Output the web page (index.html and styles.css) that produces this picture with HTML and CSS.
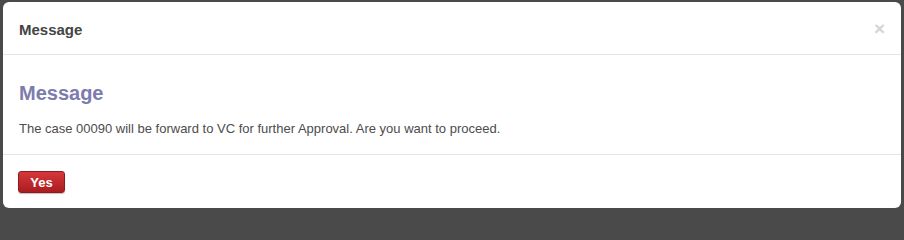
FILE: index.html
```html
<!DOCTYPE html>
<html>
<head>
<meta charset="utf-8">
<link rel="stylesheet" href="styles.css">
</head>
<body>
<div class="backdrop">
  <div class="modal">
    <div class="modal-header">
      <h4 class="modal-title">Message</h4>
      <span class="close">×</span>
    </div>
    <div class="modal-body">
      <h2 class="msg-title">Message</h2>
      <p class="msg-text">The case 00090 will be forward to VC for further Approval. Are you want to proceed.</p>
    </div>
    <div class="modal-footer">
      <button class="btn-yes">Yes</button>
    </div>
  </div>
</div>
</body>
</html>
```

FILE: styles.css
```css
html, body {
  margin: 0;
  padding: 0;
  height: 100%;
}
body {
  background: #4a4a4a;
  font-family: "Liberation Sans", Arial, sans-serif;
}
.backdrop {
  padding: 2px 3px 0 3px;
}
.modal {
  width: 898px;
  height: 206px;
  background: #fff;
  border-radius: 6px;
  box-sizing: border-box;
  display: flex;
  flex-direction: column;
  overflow: hidden;
}
.modal-header {
  height: 53px;
  border-bottom: 1px solid #e5e5e5;
  display: flex;
  align-items: center;
  justify-content: space-between;
  padding: 0 16px 0 16px;
  box-sizing: border-box;
  flex: none;
}
.modal-title {
  margin: 0;
  font-size: 15px;
  font-weight: bold;
  color: #444;
  padding-top: 2px;
}
.close {
  font-size: 19px;
  font-weight: bold;
  color: #d4d4d4;
  line-height: 1;
  margin-top: 0;
}
.modal-body {
  height: 100px;
  border-bottom: 1px solid #e5e5e5;
  padding: 25px 16px 0 16px;
  box-sizing: border-box;
  flex: none;
}
.msg-title {
  margin: 0;
  font-size: 20px;
  font-weight: bold;
  color: #7c7bad;
  line-height: 26px;
}
.msg-text {
  margin: 14px 0 0 0;
  font-size: 13px;
  color: #4c4c4c;
  line-height: 18px;
}
.modal-footer {
  padding: 16px 15px;
}
.btn-yes {
  display: block;
  width: 47px;
  height: 22px;
  padding: 0;
  font-family: "Liberation Sans", Arial, sans-serif;
  font-size: 13px;
  font-weight: bold;
  color: #fff;
  background: linear-gradient(#d6383b, #a91d20);
  border: 1px solid #8e1b1d;
  border-radius: 3px;
  box-shadow: 0 1px 1px rgba(0,0,0,0.25);
}
```
